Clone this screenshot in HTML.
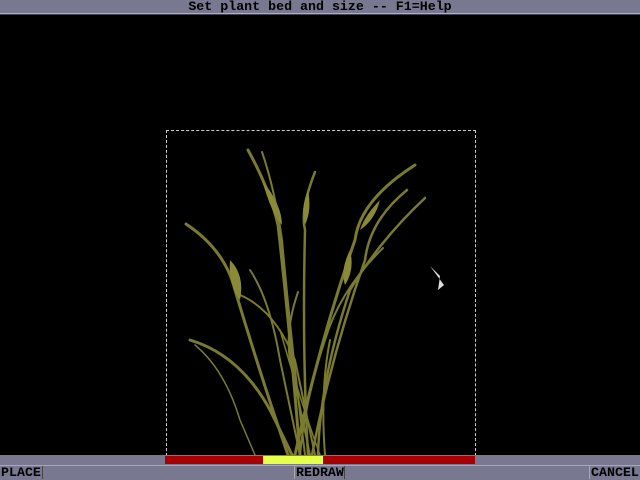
<!DOCTYPE html>
<html><head><style>
html,body{margin:0;padding:0;background:#000;width:640px;height:480px;overflow:hidden;font-family:"Liberation Mono",monospace;}
.bar{position:absolute;left:0;width:640px;background:#787890;}
.t{font-weight:bold;font-size:13.3px;color:#000;position:absolute;line-height:12px;}
</style></head><body>
<div class="bar" style="top:0;height:13px;border-bottom:1px solid #b0b0c0;"></div>
<div style="position:absolute;top:14px;left:0;width:640px;height:1px;background:#404050"></div>
<div class="t" style="top:1px;left:0;width:640px;text-align:center;">Set plant bed and size -- F1=Help</div>
<div style="position:absolute;left:166px;top:130px;width:308px;height:324px;border:1px dashed #ccc;"></div>
<svg style="position:absolute;left:0;top:0" width="640" height="480">
<g fill="none" stroke="#7a7a30" stroke-linecap="round">
<path d="M248 150 Q270 190 278 225 Q290 330 300 455" stroke-width="3"/>
<path d="M262 152 Q275 190 282 240 Q292 350 305 455" stroke-width="2"/>
<path d="M315 172 Q300 210 305 230 Q302 350 308 455" stroke-width="2.5"/>
<path d="M415 165 Q360 200 355 240 Q320 340 295 455" stroke-width="3"/>
<path d="M407 190 Q370 220 365 260 Q330 360 312 455" stroke-width="2.5"/>
<path d="M425 198 Q380 240 350 290 Q320 380 318 455" stroke-width="2.5"/>
<path d="M186 224 Q225 250 235 290 Q262 380 288 455" stroke-width="3"/>
<path d="M190 340 Q240 355 270 410 Q285 440 292 455" stroke-width="3"/>
<path d="M195 345 Q225 370 240 420 L255 455" stroke-width="1.5"/>
<path d="M250 270 Q270 300 280 360 L300 455" stroke-width="2"/>
<path d="M298 292 Q285 330 290 360 L310 455" stroke-width="2"/>
<path d="M383 248 Q340 290 325 340 Q305 400 300 455" stroke-width="2"/>
<path d="M240 295 Q275 310 295 360 L315 455" stroke-width="2"/>
<path d="M330 340 Q320 390 325 455" stroke-width="2"/>
<path d="M280 330 Q300 400 320 455" stroke-width="1.5"/>
</g>
<g fill="#8a8a38">
<path d="M262 180 Q282 205 282 225 Q272 215 262 180Z"/>
<path d="M230 260 Q245 275 240 300 Q228 285 230 260Z"/>
<path d="M308 190 Q312 210 305 225 Q300 210 308 190Z"/>
<path d="M380 200 Q365 215 360 230 Q375 220 380 200Z"/>
<path d="M350 250 Q340 270 345 285 Q355 270 350 250Z"/>
</g>
<path d="M430 266 L440 276 L438 290 L444 285 Z" fill="#ddd"/>
</svg>
<div style="position:absolute;left:0;top:455px;width:640px;height:10px;background:#787890"></div>
<div style="position:absolute;left:165px;top:456px;width:310px;height:8px;background:#a80000"></div>
<div style="position:absolute;left:263px;top:456px;width:60px;height:8px;background:#e8ff48"></div>
<div style="position:absolute;left:0;top:465px;width:640px;height:15px;background:#787890;border-top:1px solid #a8a8b8;box-sizing:border-box"></div>
<div style="position:absolute;left:42px;top:466px;width:1px;height:13px;background:#444"></div>
<div style="position:absolute;left:294px;top:466px;width:1px;height:13px;background:#aaa"></div>
<div style="position:absolute;left:344px;top:466px;width:1px;height:13px;background:#444"></div>
<div style="position:absolute;left:589px;top:466px;width:1px;height:13px;background:#aaa"></div>
<div class="t" style="top:467px;left:1px">PLACE</div>
<div class="t" style="top:467px;left:296px">REDRAW</div>
<div class="t" style="top:467px;left:591px">CANCEL</div>
</body></html>
